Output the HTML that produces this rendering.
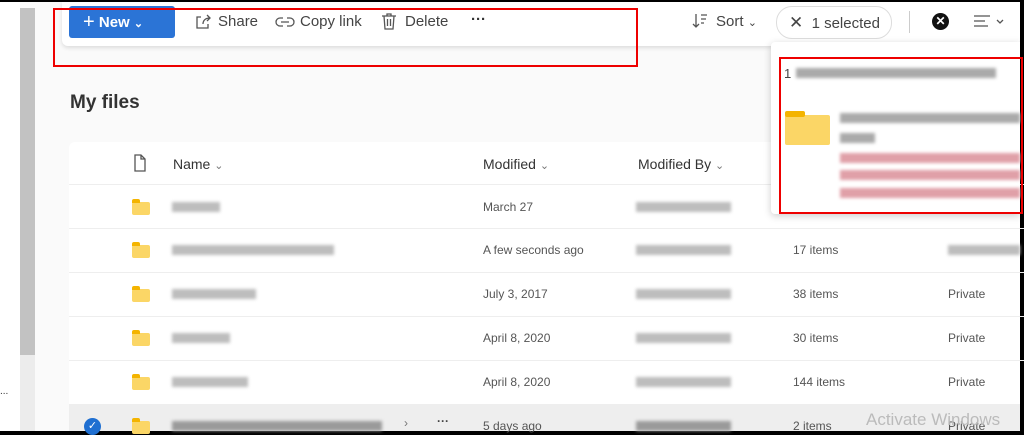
<!DOCTYPE html><html><head><style>
body{margin:0;width:1024px;height:433px;overflow:hidden;background:#000;font-family:"Liberation Sans",sans-serif;position:relative}
.a{position:absolute}
.bl{position:absolute;background:#bdbdbd;filter:blur(1.5px);height:10px}
.t{position:absolute;font-size:12px;color:#555}
.sep{position:absolute;left:69px;right:0;height:1px;background:#eee}
.f{position:absolute;width:18px;height:13px;background:#fbd666;border-radius:2px}
.f:before{content:"";position:absolute;left:0;top:-3px;width:8px;height:4px;background:#f4b400;border-radius:2px 2px 0 0}
svg{position:absolute;fill:none;stroke:#555;stroke-width:1.3}
</style></head><body>
<div class="a" style="left:0;top:2px;width:1020px;height:429px;background:#fafafa"></div>
<div class="a" style="left:0;top:2px;width:20px;height:429px;background:#fff"></div>
<div class="a" style="left:20px;top:8px;width:15px;height:347px;background:#c2c2c2"></div>
<div class="a" style="left:20px;top:355px;width:15px;height:76px;background:#ececec"></div>
<div class="a" style="left:0;top:386px;font-size:10px;color:#333">...</div>
<!-- toolbar -->
<div class="a" style="left:62px;top:2px;width:958px;height:44px;background:#fff;box-shadow:0 2px 4px rgba(0,0,0,.12);border-radius:0 0 6px 6px"></div>
<div class="a" style="left:69px;top:6px;width:106px;height:32px;background:#2b74d6;border-radius:3px;color:#fff;font-size:15px;font-weight:bold;line-height:32px"><span style="margin-left:14px;font-size:20px;font-weight:normal;vertical-align:-1px">+</span> New <span style="font-size:11px">⌄</span></div>
<svg style="left:194px;top:13px" width="18" height="18" viewBox="0 0 18 18"><path d="M7 4H3v11h11v-4M9 11c0-4 3-6 7-6M13 2l3 3-3 3"/></svg>
<div class="t" style="left:218px;top:13px;font-size:15px;color:#444">Share</div>
<svg style="left:275px;top:13px" width="20" height="18" viewBox="0 0 20 18"><path d="M8 5H5a4 4 0 000 8h3M12 5h3a4 4 0 010 8h-3M6 9h8"/></svg>
<div class="t" style="left:300px;top:13px;font-size:15px;color:#444">Copy link</div>
<svg style="left:380px;top:12px" width="18" height="19" viewBox="0 0 18 19"><path d="M2 4h14M7 4V2h4v2M4 4l1 13h8l1-13M7.5 7v7M10.5 7v7"/></svg>
<div class="t" style="left:405px;top:13px;font-size:15px;color:#444">Delete</div>
<div class="t" style="left:471px;top:11px;font-size:15px;color:#333;font-weight:bold">···</div>
<svg style="left:692px;top:12px" width="16" height="18" viewBox="0 0 16 18"><path d="M4 2v13M1 12l3 3 3-3M9 3h6M9 7h5M9 11h3"/></svg>
<div class="t" style="left:716px;top:13px;font-size:15px;color:#444">Sort <span style="font-size:11px">⌄</span></div>
<div class="a" style="left:776px;top:6px;width:114px;height:31px;border:1px solid #ddd;border-radius:16px;background:#fff;font-size:15px;color:#444;line-height:31px"><span style="margin-left:12px;font-size:17px">✕</span>&nbsp; 1 selected</div>
<div class="a" style="left:909px;top:11px;width:1px;height:22px;background:#ccc"></div>
<div class="a" style="left:932px;top:13px;width:17px;height:17px;border-radius:50%;background:#111;color:#fff;font-size:12px;text-align:center;line-height:17px;font-weight:bold">✕</div>
<svg style="left:973px;top:14px" width="32" height="16" viewBox="0 0 32 16"><path d="M1 2h16M1 7h11M1 12h14M24 6l3 3 3-3"/></svg>
<div class="a" style="left:53px;top:8px;width:581px;height:55px;border:2px solid #e00"></div>
<div class="a" style="left:70px;top:92px;font-size:19px;font-weight:bold;color:#333">My files</div>
<!-- card -->
<div class="a" style="left:69px;top:142px;width:951px;height:289px;background:#fff;border-radius:6px 0 0 0"></div>
<svg style="left:133px;top:154px" width="14" height="18" viewBox="0 0 14 18"><path d="M2 1h6l4 4v12H2z M8 1v4h4"/></svg>
<div class="t" style="left:173px;top:156px;font-size:14px;color:#333">Name <span style="font-size:11px;color:#777">⌄</span></div>
<div class="t" style="left:483px;top:156px;font-size:14px;color:#333">Modified <span style="font-size:11px;color:#777">⌄</span></div>
<div class="t" style="left:638px;top:156px;font-size:14px;color:#333">Modified By <span style="font-size:11px;color:#777">⌄</span></div>
<div class="sep" style="top:184px"></div><div class="sep" style="top:228px"></div><div class="sep" style="top:272px"></div><div class="sep" style="top:316px"></div><div class="sep" style="top:360px"></div>
<div class="a" style="left:69px;top:404px;width:951px;height:27px;background:#eee"></div>
<div class="f" style="left:132px;top:202px"></div><div class="f" style="left:132px;top:245px"></div><div class="f" style="left:132px;top:289px"></div><div class="f" style="left:132px;top:333px"></div><div class="f" style="left:132px;top:377px"></div><div class="f" style="left:132px;top:421px"></div>
<div class="bl" style="left:172px;top:202px;width:48px"></div>
<div class="bl" style="left:172px;top:245px;width:162px"></div>
<div class="bl" style="left:172px;top:289px;width:84px"></div>
<div class="bl" style="left:172px;top:333px;width:58px"></div>
<div class="bl" style="left:172px;top:377px;width:76px"></div>
<div class="bl" style="left:172px;top:421px;width:210px;background:#9a9a9a"></div>
<div class="t" style="left:483px;top:200px">March 27</div>
<div class="t" style="left:483px;top:243px">A few seconds ago</div>
<div class="t" style="left:483px;top:287px">July 3, 2017</div>
<div class="t" style="left:483px;top:331px">April 8, 2020</div>
<div class="t" style="left:483px;top:375px">April 8, 2020</div>
<div class="t" style="left:483px;top:419px">5 days ago</div>
<div class="bl" style="left:636px;top:202px;width:95px"></div><div class="bl" style="left:636px;top:245px;width:95px"></div><div class="bl" style="left:636px;top:289px;width:95px"></div><div class="bl" style="left:636px;top:333px;width:95px"></div><div class="bl" style="left:636px;top:377px;width:95px"></div><div class="bl" style="left:636px;top:421px;width:95px;background:#9a9a9a"></div>
<div class="t" style="left:793px;top:243px">17 items</div><div class="t" style="left:793px;top:287px">38 items</div><div class="t" style="left:793px;top:331px">30 items</div><div class="t" style="left:793px;top:375px">144 items</div><div class="t" style="left:793px;top:419px">2 items</div>
<div class="bl" style="left:948px;top:245px;width:72px"></div>
<div class="t" style="left:948px;top:287px">Private</div><div class="t" style="left:948px;top:331px">Private</div><div class="t" style="left:948px;top:375px">Private</div><div class="t" style="left:948px;top:419px">Private</div>
<div class="t" style="left:404px;top:416px;color:#777">›</div>
<div class="t" style="left:437px;top:414px;font-weight:bold;color:#444">···</div>
<div class="a" style="left:84px;top:418px;width:17px;height:17px;border-radius:50%;background:#1f6fd1;color:#fff;font-size:11px;text-align:center;line-height:17px">✓</div>
<div class="a" style="left:866px;top:410px;font-size:17px;color:#bbb">Activate Windows</div>
<!-- popup -->
<div class="a" style="left:771px;top:42px;width:249px;height:172px;background:#fff;box-shadow:0 2px 8px rgba(0,0,0,.2);border-radius:4px 0 0 4px"></div>
<div class="t" style="left:784px;top:66px;font-size:13px;color:#444">1</div>
<div class="bl" style="left:796px;top:68px;width:200px;background:#aaa"></div>
<div class="a" style="left:785px;top:115px;width:45px;height:30px;background:#fbd666;border-radius:2px"></div>
<div class="a" style="left:785px;top:111px;width:20px;height:6px;background:#f4b400;border-radius:2px"></div>
<div class="bl" style="left:840px;top:113px;width:180px;background:#aaa"></div>
<div class="bl" style="left:840px;top:133px;width:35px;background:#aaa"></div>
<div class="bl" style="left:840px;top:153px;width:180px;background:#e0a0a8"></div>
<div class="bl" style="left:840px;top:170px;width:180px;background:#e0a0a8"></div>
<div class="bl" style="left:840px;top:188px;width:180px;background:#e0a0a8"></div>
<div class="a" style="left:779px;top:57px;width:240px;height:153px;border:2px solid #e00"></div>
</body></html>
